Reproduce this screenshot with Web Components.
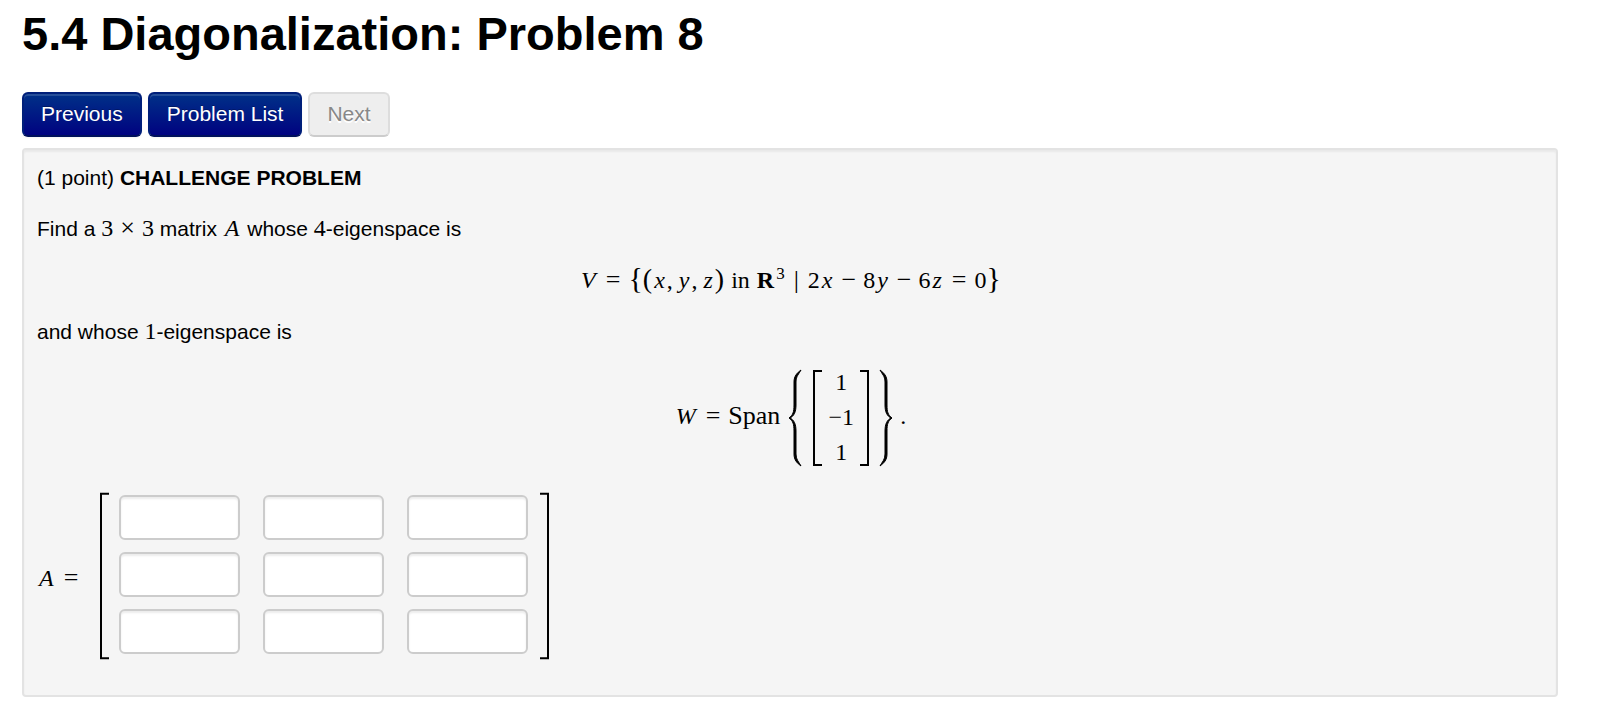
<!DOCTYPE html>
<html lang="en">
<head>
<meta charset="utf-8">
<title>5.4 Diagonalization: Problem 8</title>
<style>
body { margin: 0; background: #fff; color: #000; font: 21px/30px "Liberation Sans", Arial, sans-serif; }
</style>
</head>
<body>
<problem-page></problem-page>
<script>
const define = (name, html, setup) => {
  const template = document.createElement('template');
  template.innerHTML = html;
  customElements.define(name, class extends HTMLElement {
    connectedCallback() {
      if (this.shadowRoot) return;
      this.attachShadow({ mode: 'open' }).append(template.content.cloneNode(true));
      if (setup) setup(this, this.shadowRoot);
    }
  });
};

define('nav-button', `
<style>
:host { display: block; }
button {
  display: block; box-sizing: border-box; height: 45px; padding: 0 17px 2px;
  border: 2px solid #001f7a; border-bottom-color: #00115c; border-radius: 6px;
  background: linear-gradient(#003388, #000080) border-box; color: #fff;
  font: inherit; text-shadow: 0 -1px 0 rgba(0,0,0,.25);
  box-shadow: inset 0 2px 0 rgba(255,255,255,.15), 0 1px 2px rgba(0,0,0,.05);
}
button:disabled {
  background: #eee; border-color: #ddd #ddd #ccc; color: #888;
  text-shadow: 0 2px 0 #fff; box-shadow: none;
}
</style>
<button type="button"><slot></slot></button>`, (host, root) => {
  root.querySelector('button').disabled = host.hasAttribute('disabled');
});

/* Variable, number, relation, binary operator, punctuation, fence */
define('math-sym', `
<style>
:host { display: inline-block; font: 24px/26px "Liberation Serif", "Times New Roman", serif; }
:host([kind=var]) { font-style: italic; padding: 0 2px; }
:host([kind=rel]) { font-size: 26px; padding: 0 8px; }
:host([kind=bin]) { font-size: 26px; padding: 0 7px; }
:host([kind=punct]) { padding-right: 4px; }
:host([kind=word]) { font-size: 26px; padding-right: 9px; }
:host([kind=text]) { padding: 0 7px; }
:host([kind=end]) { padding-left: 8px; }
:host([kind=bold]) { font-weight: bold; }
:host([kind=sup]) { font-size: 17px; line-height: 18px; align-self: flex-start; padding-left: 2px; }
:host([kind=fence]) { font-size: 28px; }
:host([kind=brace]) { font-size: 30px; }
:host([kind=bar]) { padding: 0 9px; font-size: 26px; }
</style><slot></slot>`);

define('display-math', `
<style>
:host { display: flex; justify-content: center; align-items: baseline; height: 31px; }
:host([tall]) { align-items: center; height: 100px; }
:host([tall]) ::slotted(math-sym) { padding-bottom: 4px; }
</style><slot></slot>`);

define('tall-fence', `
<style>
:host { display: block; align-self: stretch; }
svg { display: block; height: 100%; fill: none; stroke: #000; stroke-width: 2; overflow: visible; }
:host([flip]) svg { transform: scaleX(-1); }
</style>
<svg class="brace" width="13" viewBox="0 0 13 96" preserveAspectRatio="none" aria-hidden="true"><path d="M12 0C8 3 5 6 5 12V35C5 42 4 45 0 48C4 51 5 54 5 61V84C5 90 8 93 12 96C10 92 7 90 7 84V61C7 54 5 50 1 48C5 46 7 42 7 35V12C7 6 10 4 12 0Z" fill="#000" stroke-width="1"/></svg>
<svg class="bracket" width="9" viewBox="0 0 9 96" preserveAspectRatio="none" aria-hidden="true"><path d="M9 1H1V95H9" vector-effect="non-scaling-stroke"/></svg>`,
(host, root) => {
  const other = host.getAttribute('shape') === 'brace' ? '.bracket' : '.brace';
  root.querySelector(other).remove();
});

define('column-vector', `
<style>
:host { display: flex; height: 96px; margin: 0 10px 0 11px; }
.cells { display: flex; flex-direction: column; align-items: center; justify-content: center; gap: 5px; width: 38px; padding-bottom: 2px;
  font: 24px/30px "Liberation Serif", "Times New Roman", serif; }
.cells ::slotted(span) { display: block; }
</style>
<tall-fence shape="bracket"></tall-fence><div class="cells"><slot></slot></div><tall-fence shape="bracket" flip></tall-fence>`);

define('column-brace', `
<style>
:host { display: flex; height: 96px; }
</style>
<tall-fence shape="brace"></tall-fence><slot></slot><tall-fence shape="brace" flip></tall-fence>`);

define('matrix-answer', `
<style>
:host { display: flex; padding: 3px 0; height: 168px; }
.label { display: flex; align-items: baseline; align-self: center; width: 63px; padding-top: 3px; }
.grid { display: grid; grid-template-columns: repeat(3, 121px); gap: 12px 23px; padding: 3px 12px 0 10px; align-content: start; }
input {
  box-sizing: border-box; width: 121px; height: 45px; margin: 0; padding: 6px 9px;
  border: 2px solid #ccc; border-radius: 6px; background: #fff; font: inherit; outline: 0;
  box-shadow: inset 0 2px 2px rgba(0,0,0,.075);
}
</style>
<div class="label"><math-sym kind="var">A</math-sym><math-sym kind="rel">=</math-sym></div>
<tall-fence shape="bracket"></tall-fence>
<div class="grid"></div>
<tall-fence shape="bracket" flip></tall-fence>`, (host, root) => {
  const grid = root.querySelector('.grid');
  for (let r = 1; r <= 3; r++) for (let c = 1; c <= 3; c++) {
    const input = document.createElement('input');
    input.type = 'text';
    input.setAttribute('aria-label', `Row ${r}, column ${c}`);
    grid.append(input);
  }
});

define('problem-panel', `
<style>
:host {
  display: flex; flex-direction: column; gap: 21px; margin-top: 11px; padding: 13px 13px 32px;
  border: 2px solid #e3e3e3; border-radius: 4px; background: #f5f5f5;
  box-shadow: inset 0 2px 2px rgba(0,0,0,.05);
}
</style><slot></slot>`);

define('problem-page', `
<style>
:host { display: block; padding: 4px 50px 20px 22px; }
h1 { margin: 0 0 28px; font-size: 47px; line-height: 60px; }
nav { display: flex; gap: 6px; }
p { margin: 0; height: 30px; }
</style>
<h1>5.4 Diagonalization: Problem 8</h1>
<nav><nav-button>Previous</nav-button><nav-button>Problem List</nav-button><nav-button disabled>Next</nav-button></nav>
<problem-panel>
  <p>(1 point) <b>CHALLENGE PROBLEM</b></p>
  <p>Find a <math-sym>3</math-sym><math-sym kind="bin">×</math-sym><math-sym>3</math-sym> matrix <math-sym kind="var">A</math-sym> whose <math-sym>4</math-sym>-eigenspace is</p>
  <display-math><math-sym kind="var">V</math-sym><math-sym kind="rel">=</math-sym><math-sym kind="brace">{</math-sym><math-sym kind="fence">(</math-sym><math-sym kind="var">x</math-sym><math-sym kind="punct">,</math-sym><math-sym kind="var">y</math-sym><math-sym kind="punct">,</math-sym><math-sym kind="var">z</math-sym><math-sym kind="fence">)</math-sym><math-sym kind="text">in</math-sym><math-sym kind="bold">R</math-sym><math-sym kind="sup">3</math-sym><math-sym kind="bar">|</math-sym><math-sym>2</math-sym><math-sym kind="var">x</math-sym><math-sym kind="bin">−</math-sym><math-sym>8</math-sym><math-sym kind="var">y</math-sym><math-sym kind="bin">−</math-sym><math-sym>6</math-sym><math-sym kind="var">z</math-sym><math-sym kind="rel">=</math-sym><math-sym>0</math-sym><math-sym kind="brace">}</math-sym></display-math>
  <p>and whose <math-sym>1</math-sym>-eigenspace is</p>
  <display-math tall><math-sym kind="var">W</math-sym><math-sym kind="rel">=</math-sym><math-sym kind="word">Span</math-sym><column-brace><column-vector><span>1</span><span>−1</span><span>1</span></column-vector></column-brace><math-sym kind="end">.</math-sym></display-math>
  <matrix-answer></matrix-answer>
</problem-panel>`);
</script>
</body>
</html>
